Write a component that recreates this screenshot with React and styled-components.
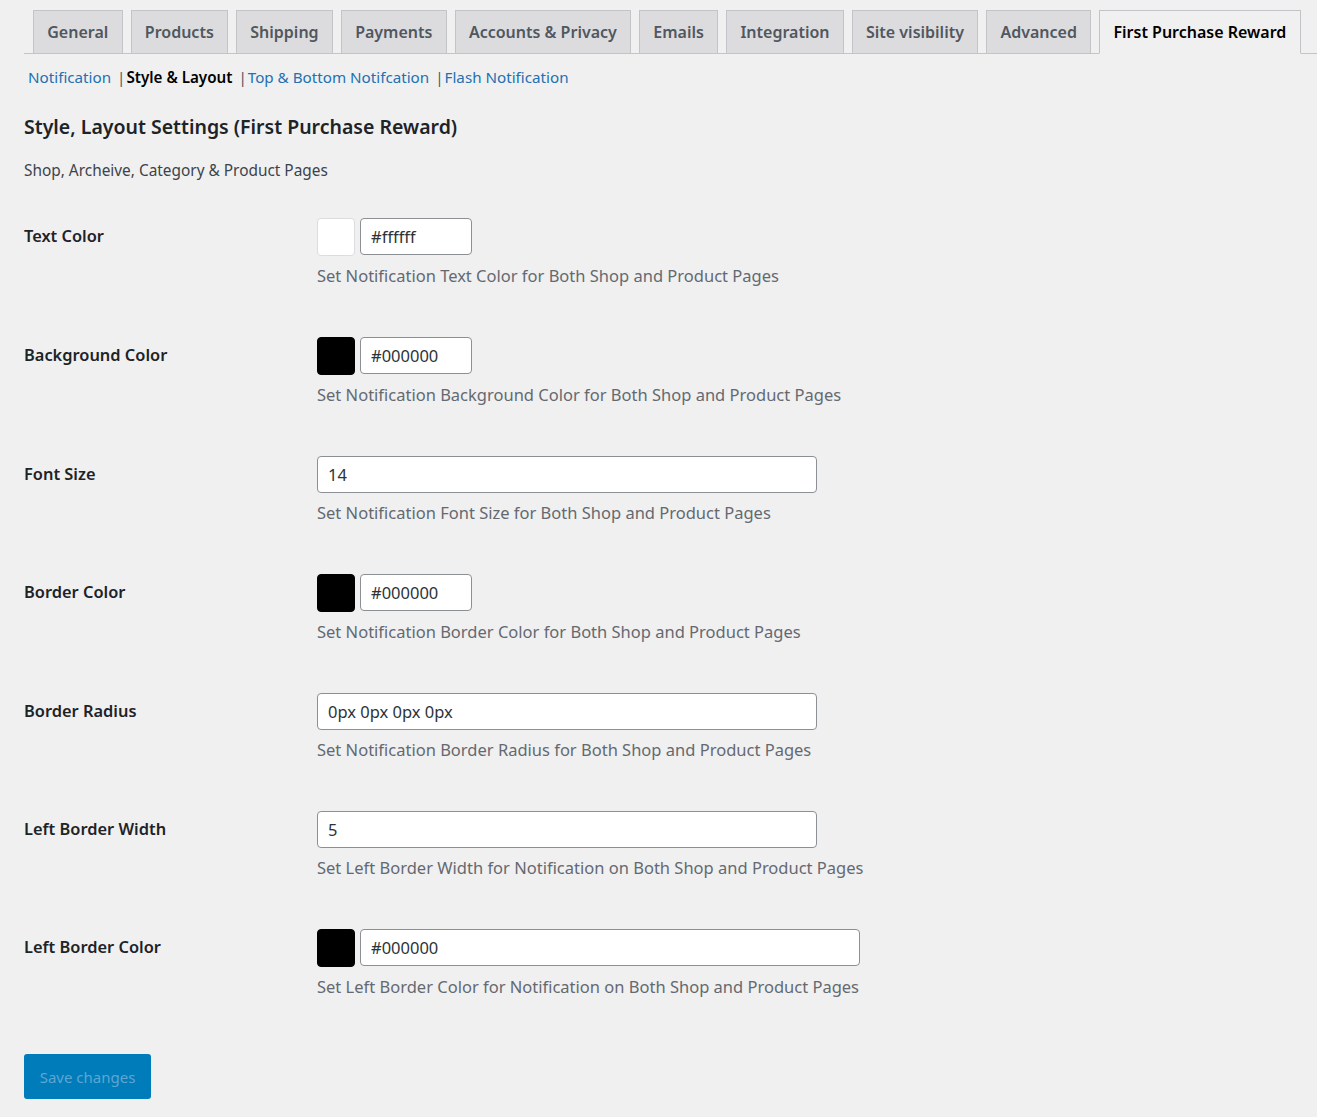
import styled, { createGlobalStyle } from 'styled-components';

const GlobalStyle = createGlobalStyle`
  body {
    margin: 0;
    background: #f0f0f1;
    font-family: "Noto Sans", "Open Sans", sans-serif;
    color: #1d2327;
  }
  * { box-sizing: border-box; }
`;

const TABS = [
  'General',
  'Products',
  'Shipping',
  'Payments',
  'Accounts & Privacy',
  'Emails',
  'Integration',
  'Site visibility',
  'Advanced',
  'First Purchase Reward',
];

const SUBNAV = [
  { label: 'Notification' },
  { label: 'Style & Layout', current: true },
  { label: 'Top & Bottom Notifcation' },
  { label: 'Flash Notification' },
];

const FIELDS = [
  { label: 'Text Color', type: 'color', swatch: '#ffffff', value: '#ffffff', desc: 'Set Notification Text Color for Both Shop and Product Pages' },
  { label: 'Background Color', type: 'color', swatch: '#000000', value: '#000000', desc: 'Set Notification Background Color for Both Shop and Product Pages' },
  { label: 'Font Size', type: 'text', value: '14', desc: 'Set Notification Font Size for Both Shop and Product Pages' },
  { label: 'Border Color', type: 'color', swatch: '#000000', value: '#000000', desc: 'Set Notification Border Color for Both Shop and Product Pages' },
  { label: 'Border Radius', type: 'text', value: '0px 0px 0px 0px', desc: 'Set Notification Border Radius for Both Shop and Product Pages' },
  { label: 'Left Border Width', type: 'text', value: '5', desc: 'Set Left Border Width for Notification on Both Shop and Product Pages' },
  { label: 'Left Border Color', type: 'color', swatch: '#000000', value: '#000000', wide: true, desc: 'Set Left Border Color for Notification on Both Shop and Product Pages' },
];

const App = () => {
  return (
    <>
      <GlobalStyle />
      <Wrap>
        <TabBar>
          {TABS.map((t, i) => (
            <Tab key={t} $active={i === TABS.length - 1}>{t}</Tab>
          ))}
        </TabBar>

        <SubNav>
          {SUBNAV.map((s, i) => (
            <li key={s.label}>
              {i > 0 && <Sep>|</Sep>}
              {s.current ? <Current>{s.label}</Current> : <SubLink href="#">{s.label}</SubLink>}
            </li>
          ))}
        </SubNav>

        <Heading>Style, Layout Settings (First Purchase Reward)</Heading>
        <Intro>Shop, Archeive, Category &amp; Product Pages</Intro>

        <Form onSubmit={(e) => e.preventDefault()}>
          {FIELDS.map((f) => (
            <Row key={f.label}>
              <Label>{f.label}</Label>
              <div>
                {f.type === 'color' ? (
                  <ColorControl>
                    <Swatch $color={f.swatch} />
                    <TextInput $width={f.wide ? 500 : 112} defaultValue={f.value} />
                  </ColorControl>
                ) : (
                  <TextInput $width={500} defaultValue={f.value} />
                )}
                <Description>{f.desc}</Description>
              </div>
            </Row>
          ))}
          <SaveButton type="submit" disabled>Save changes</SaveButton>
        </Form>
      </Wrap>
    </>
  );
};

const Wrap = styled.div`
  padding: 10px 0 40px 24px;
`;

const TabBar = styled.nav`
  display: flex;
  gap: 8px;
  padding-left: 9px;
  border-bottom: 1px solid #c3c4c7;
`;

const Tab = styled.a`
  display: flex;
  align-items: center;
  height: 44px;
  padding: 0 13.25px;
  margin-bottom: -1px;
  border: 1px solid #c3c4c7;
  border-bottom-color: ${(p) => (p.$active ? '#f0f0f1' : '#c3c4c7')};
  background: ${(p) => (p.$active ? '#f0f0f1' : '#dcdcde')};
  color: ${(p) => (p.$active ? '#000' : '#50575e')};
  font-size: 16px;
  font-weight: 600;
  white-space: nowrap;
  cursor: pointer;
`;

const SubNav = styled.ul`
  display: flex;
  list-style: none;
  margin: 11px 0 0 4px;
  padding: 0;
  font-size: 15.2px;
  line-height: 24px;
`;

const Sep = styled.span`
  color: #50575e;
  margin: 0 1px 0 6px;
`;

const SubLink = styled.a`
  color: #2271b1;
  text-decoration: none;
`;

const Current = styled.span`
  color: #000;
  font-weight: 600;
`;

const Heading = styled.h2`
  margin: 23px 0 0;
  font-size: 19.5px;
  line-height: 30px;
  font-weight: 600;
  color: #1d2327;
`;

const Intro = styled.p`
  margin: 17px 0 0;
  font-size: 15.4px;
  line-height: 24px;
  color: #3c434a;
`;

const Form = styled.form`
  margin-top: 35px;
`;

const Row = styled.div`
  display: grid;
  grid-template-columns: 293px auto;
  padding-bottom: 49px;
`;

const Label = styled.label`
  padding-top: 6px;
  font-size: 16.4px;
  line-height: 24px;
  font-weight: 600;
  color: #1d2327;
`;

const ColorControl = styled.div`
  display: flex;
  align-items: flex-start;
  gap: 5px;
  height: 38px;
`;

const Swatch = styled.span`
  width: 38px;
  height: 38px;
  border-radius: 4px;
  background: ${(p) => p.$color};
  border: 1px solid ${(p) => (p.$color === '#ffffff' ? '#dcdcde' : p.$color)};
`;

const TextInput = styled.input`
  display: block;
  width: ${(p) => p.$width}px;
  height: 37px;
  padding: 0 10px;
  border: 1px solid #8c8f94;
  border-radius: 4px;
  background: #fff;
  font-family: inherit;
  font-size: 16.5px;
  color: #2c3338;
  outline: none;
`;

const Description = styled.p`
  margin: 8px 0 0;
  font-size: 16.5px;
  line-height: 24px;
  color: #646970;
`;

const SaveButton = styled.button`
  margin-top: 6px;
  width: 127px;
  height: 45px;
  border: none;
  border-radius: 3px;
  background: #007cba;
  color: #5ea6d3;
  font-family: inherit;
  font-size: 15px;
`;

export default App;
